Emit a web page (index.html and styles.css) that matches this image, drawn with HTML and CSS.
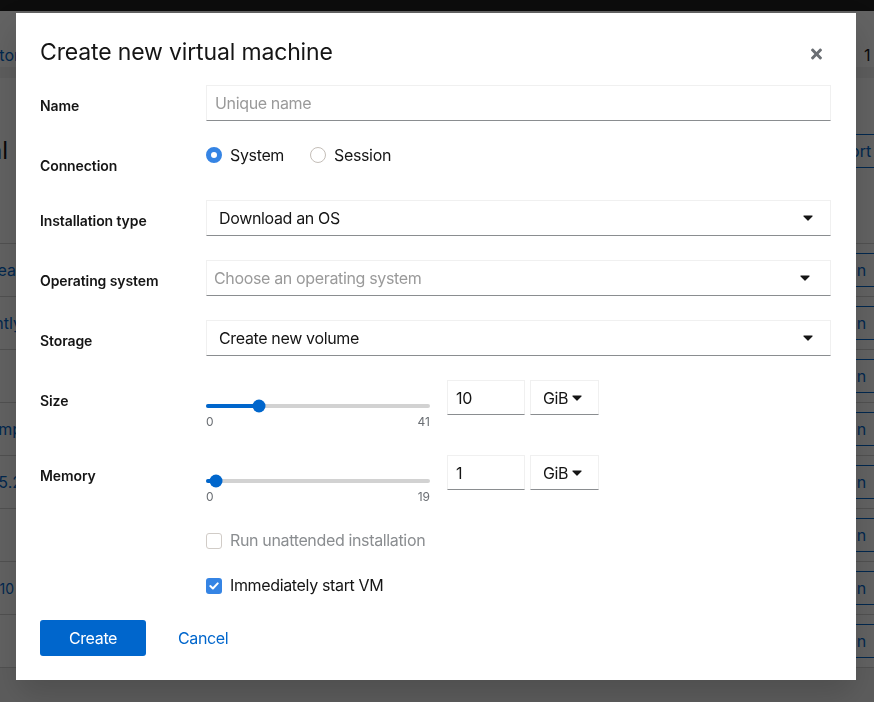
FILE: index.html
```html
<!DOCTYPE html>
<html lang="en">
<head>
<meta charset="utf-8">
<title>Create new virtual machine</title>
<link rel="stylesheet" href="styles.css">
</head>
<body>
<div class="page">
  <div class="masthead"></div>
  <div class="topnav">
    <div class="nav-left"><span class="nav-link">Host monitor</span></div>
    <div class="nav-right">1</div>
  </div>
  <div class="strip"></div>
  <div class="section">
    <div class="toolbar">
      <h1 class="page-title">Virtual machines</h1>
      <div class="toolbar-right"><span class="btn-outline">Import VM</span></div>
    </div>
    <div class="table">
      <div class="trow"><div class="cell-l"><span class="tlink">linear</span></div><div class="cell-r"><span class="btn-outline">Run</span></div></div>
      <div class="trow"><div class="cell-l"><span class="tlink">nightly</span></div><div class="cell-r"><span class="btn-outline">Run</span></div></div>
      <div class="trow"><div class="cell-l"></div><div class="cell-r"><span class="btn-outline">Run</span></div></div>
      <div class="trow"><div class="cell-l"><span class="tlink">temp</span></div><div class="cell-r"><span class="btn-outline">Run</span></div></div>
      <div class="trow"><div class="cell-l"><span class="tlink">rhel-8.5.2</span></div><div class="cell-r"><span class="btn-outline">Run</span></div></div>
      <div class="trow"><div class="cell-l"></div><div class="cell-r"><span class="btn-outline">Run</span></div></div>
      <div class="trow"><div class="cell-l short"><span class="tlink">win 10</span></div><div class="cell-r"><span class="btn-outline">Run</span></div></div>
      <div class="trow"><div class="cell-l"></div><div class="cell-r"><span class="btn-outline">Run</span></div></div>
    </div>
  </div>
</div>

<div class="backdrop">
  <div class="modal" role="dialog" aria-label="Create new virtual machine">
    <header class="modal-header">
      <h1 class="modal-title">Create new virtual machine</h1>
      <button class="close" type="button" aria-label="Close">
        <svg width="11" height="16" viewBox="0 0 352 512"><path fill="currentColor" d="M242.72 256l100.07-100.07c12.28-12.28 12.28-32.19 0-44.48l-22.24-22.24c-12.28-12.28-32.19-12.28-44.48 0L176 189.28 75.930 89.210c-12.280-12.280-32.190-12.280-44.480 0L9.21 111.45c-12.28 12.28-12.28 32.19 0 44.48L109.28 256 9.21 356.07c-12.28 12.28-12.28 32.19 0 44.48l22.24 22.240c12.28 12.28 32.2 12.28 44.48 0L176 322.72l100.07 100.07c12.28 12.28 32.2 12.28 44.48 0l22.24-22.24c12.28-12.28 12.28-32.19 0-44.48L242.72 256z"/></svg>
      </button>
    </header>
    <div class="modal-body">
      <div class="form">
        <div class="label">Name</div>
        <div class="control"><input class="text-input" type="text" placeholder="Unique name"></div>

        <div class="label">Connection</div>
        <div class="control radios">
          <span class="radio-item"><span class="radio checked"></span><span>System</span></span>
          <span class="radio-item"><span class="radio"></span><span>Session</span></span>
        </div>

        <div class="label">Installation type</div>
        <div class="control"><div class="select"><span>Download an OS</span><svg class="caret" width="10" height="6" viewBox="0 190 320 172"><path fill="currentColor" d="M31.3 192h257.3c17.8 0 26.7 21.5 14.1 34.1L174.1 354.8c-7.8 7.8-20.5 7.8-28.3 0L17.2 226.1C4.6 213.5 13.5 192 31.3 192z"/></svg></div></div>

        <div class="label">Operating system</div>
        <div class="control"><div class="select typeahead"><span class="ph">Choose an operating system</span><svg class="caret" width="10" height="6" viewBox="0 190 320 172"><path fill="currentColor" d="M31.3 192h257.3c17.8 0 26.7 21.5 14.1 34.1L174.1 354.8c-7.8 7.8-20.5 7.8-28.3 0L17.2 226.1C4.6 213.5 13.5 192 31.3 192z"/></svg></div></div>

        <div class="label">Storage</div>
        <div class="control"><div class="select"><span>Create new volume</span><svg class="caret" width="10" height="6" viewBox="0 190 320 172"><path fill="currentColor" d="M31.3 192h257.3c17.8 0 26.7 21.5 14.1 34.1L174.1 354.8c-7.8 7.8-20.5 7.8-28.3 0L17.2 226.1C4.6 213.5 13.5 192 31.3 192z"/></svg></div></div>

        <div class="label">Size</div>
        <div class="control size-row">
          <div class="slider">
            <div class="rail"><div class="fill" style="width:24.4%"></div><div class="thumb" style="left:24.4%"></div></div>
            <div class="ticks"><span>0</span><span>41</span></div>
          </div>
          <input class="num-input" type="text" value="10">
          <div class="unit"><span>GiB</span><svg class="caret" width="10" height="6" viewBox="0 190 320 172"><path fill="currentColor" d="M31.3 192h257.3c17.8 0 26.7 21.5 14.1 34.1L174.1 354.8c-7.8 7.8-20.5 7.8-28.3 0L17.2 226.1C4.6 213.5 13.5 192 31.3 192z"/></svg></div>
        </div>

        <div class="label">Memory</div>
        <div class="control size-row">
          <div class="slider">
            <div class="rail"><div class="fill" style="width:5.3%"></div><div class="thumb" style="left:5.3%"></div></div>
            <div class="ticks"><span>0</span><span>19</span></div>
          </div>
          <input class="num-input" type="text" value="1">
          <div class="unit"><span>GiB</span><svg class="caret" width="10" height="6" viewBox="0 190 320 172"><path fill="currentColor" d="M31.3 192h257.3c17.8 0 26.7 21.5 14.1 34.1L174.1 354.8c-7.8 7.8-20.5 7.8-28.3 0L17.2 226.1C4.6 213.5 13.5 192 31.3 192z"/></svg></div>
        </div>

        <div class="label empty"></div>
        <div class="control check-row disabled"><span class="checkbox"></span><span>Run unattended installation</span></div>

        <div class="label empty"></div>
        <div class="control check-row"><span class="checkbox checked"><svg width="10" height="8" viewBox="0 0 10 8"><path d="M1.3 4.1 L3.9 6.5 L8.7 1.4" fill="none" stroke="#fff" stroke-width="2" stroke-linecap="round" stroke-linejoin="round"/></svg></span><span>Immediately start VM</span></div>
      </div>
    </div>
    <footer class="modal-footer">
      <button class="btn-primary" type="button">Create</button>
      <button class="btn-link" type="button">Cancel</button>
    </footer>
  </div>
</div>
</body>
</html>
```

FILE: styles.css
```css
* { box-sizing: border-box; }
html, body { margin: 0; padding: 0; }
body {
  width: 874px;
  height: 702px;
  overflow: hidden;
  position: relative;
  font-family: Inter, "Noto Sans", sans-serif;
  color: #151515;
  background: #f0f0f0;
}

/* ---------- background page ---------- */
.page { height: 702px; display: flex; flex-direction: column; background: #f0f0f0; }
.masthead { height: 11px; background: #1f1f1f; flex: none; }
.topnav {
  height: 56px; flex: none; background: #fff;
  display: flex; justify-content: space-between; align-items: center;
  padding-top: 32px;
}
.nav-left { width: 20px; display: flex; justify-content: flex-end; white-space: nowrap; }
.nav-link { color: #0066cc; font-size: 16px; }
.nav-right { width: 10px; font-size: 16px; }
.strip { height: 11px; flex: none; background: #f0f0f0; }
.section { background: #fff; flex: none; height: 589px; }
.toolbar {
  height: 165px; display: flex; justify-content: space-between; align-items: flex-start;
  padding-top: 56px;
}
.page-title { margin: 0 0 0 -65px; font-size: 24px; font-weight: 400; line-height: 34px; white-space: nowrap; }
.toolbar-right { width: 69px; display: flex; white-space: nowrap; }
.btn-outline {
  display: inline-block; border: 1px solid #0066cc; border-radius: 3px;
  color: #0066cc; font-size: 16px; line-height: 22px; padding: 5px 16px; white-space: nowrap;
}
.table { border-top: 1px solid #d2d2d2; }
.trow {
  height: 53px; border-bottom: 1px solid #d2d2d2;
  display: flex; justify-content: space-between; align-items: center;
}
.cell-l { width: 22px; display: flex; justify-content: flex-end; white-space: nowrap; }
.cell-l.short { width: 14px; }
.tlink { color: #0066cc; font-size: 16px; }
.cell-l.short .tlink { font-size: 14px; }
.cell-r { width: 54px; display: flex; }

/* ---------- backdrop + modal ---------- */
.backdrop {
  position: fixed; inset: 0;
  background: rgba(3, 3, 3, 0.62);
  display: flex; align-items: flex-start; justify-content: flex-start;
  padding: 13px 0 0 16px;
}
.modal {
  width: 840px;
  background: #fff;
  box-shadow: 0 16px 32px rgba(3, 3, 3, 0.16);
  display: flex; flex-direction: column;
}
.modal-header {
  display: flex; justify-content: space-between; align-items: flex-start;
  padding: 24px 18px 0 24px;
}
.modal-title {
  margin: 0; font-size: 23px; font-weight: 400; line-height: 31px; letter-spacing: -0.15px;
  color: #151515;
}
.close {
  border: 0; background: transparent; color: #6a6e73;
  padding: 9px 16px 6px; cursor: pointer; display: flex;
}
.modal-body { padding: 17px 25px 0 24px; }

.form {
  display: grid;
  grid-template-columns: 150px 1fr;
  column-gap: 16px;
  row-gap: 24px;
}
.label {
  font-size: 14px; font-weight: 600; line-height: 21px; padding-top: 10px;
  color: #151515; letter-spacing: -0.1px;
}
.label.empty { padding-top: 0; }
.control { min-width: 0; font-size: 16px; letter-spacing: -0.35px; }

.text-input, .num-input {
  display: block;
  width: 100%; height: 36px;
  border: 1px solid #f0f0f0; border-bottom-color: #8a8d90;
  padding: 6px 8px;
  font: 16px Inter, "Noto Sans", sans-serif; letter-spacing: -0.35px; color: #151515;
  background: #fff; outline: none;
}
.text-input::placeholder { color: #9a9a9a; }

.radios { display: flex; align-self: start; align-items: center; gap: 26px; line-height: 20px; height: 20px; }
.radio-item { display: inline-flex; align-items: center; gap: 8px; }
.radio {
  width: 16px; height: 16px; border-radius: 50%;
  border: 1.5px solid #c4beb8; background: #fff; flex: none;
}
.radio.checked { border: 5px solid #3584e4; background: #fff; }

.select {
  height: 36px; display: flex; align-items: center; justify-content: space-between;
  border: 1px solid #f0f0f0; border-bottom-color: #8a8d90;
  padding: 0 17px 0 12px; color: #151515;
}
.select.typeahead { padding: 0 20px 0 7px; }
.ph { color: #9a9a9a; }
.caret { display: block; flex: none; color: #151515; }

.size-row { display: flex; align-items: flex-start; }
.slider { width: 224px; flex: none; padding-top: 24px; margin-right: 17px; }
.rail { position: relative; height: 4px; border-radius: 2px; background: #d2d2d2; }
.fill { height: 4px; border-radius: 2px; background: #0066cc; }
.thumb {
  position: absolute; top: 50%; width: 13px; height: 13px; border-radius: 50%;
  background: #0066cc; transform: translate(calc(-50% - 2px), -50%);
}
.ticks {
  display: flex; justify-content: space-between;
  margin-top: 4px; font-size: 12px; line-height: 19px; color: #6a6e73; letter-spacing: 0;
}
.num-input { width: 78px; height: 35px; flex: none; }
.unit {
  height: 35px; display: flex; align-items: center; gap: 4px;
  border: 1px solid #f0f0f0; border-bottom-color: #8a8d90;
  padding: 0 16px 0 12px; margin-left: 5px;
}

.check-row { display: flex; align-items: center; gap: 8px; line-height: 21px; }
.check-row.disabled { color: #8a8d90; }
.checkbox {
  width: 16px; height: 16px; border-radius: 3px; flex: none;
  border: 1.5px solid #d1ccc7; background: #fff;
  display: flex; align-items: center; justify-content: center;
}
.checkbox.checked { border: 0; background: #3584e4; }

.modal-footer { display: flex; align-items: center; gap: 16px; padding: 24px 24px 24px 24px; }
.btn-primary {
  height: 36px; width: 106px; padding: 0; border: 0; border-radius: 3px;
  background: #0066cc; color: #fff;
  font: 16px Inter, "Noto Sans", sans-serif; letter-spacing: -0.35px;
}
.btn-link {
  height: 36px; padding: 0 16px; border: 0; background: transparent;
  color: #0066cc; font: 16px Inter, "Noto Sans", sans-serif; letter-spacing: -0.35px;
}
```
